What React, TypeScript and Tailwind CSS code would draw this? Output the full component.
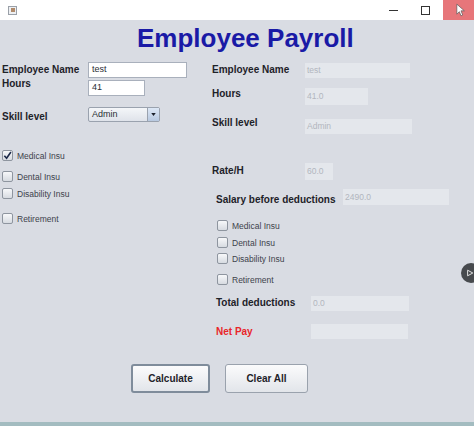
import type { ReactNode } from "react";

const font = { fontFamily: '"Liberation Sans", Arial, sans-serif' };

function Label({ children, className = "" }: { children: ReactNode; className?: string }) {
  return (
    <span className={`text-[10px] leading-[12px] font-bold text-[#1e2229] whitespace-nowrap ${className}`}>
      {children}
    </span>
  );
}

function Box({ checked = false }: { checked?: boolean }) {
  return (
    <span className="relative flex h-[11px] w-[11px] shrink-0 items-center justify-center rounded-[2px] border border-[#8e959f] bg-gradient-to-b from-[#f7f8fa] to-[#d7dbe1]">
      {checked && (
        <svg viewBox="0 0 10 10" className="h-[9px] w-[9px]">
          <path d="M1.5 5.2 L4 8 L8.8 1.2" fill="none" stroke="#1d2a4a" strokeWidth="1.8" />
        </svg>
      )}
    </span>
  );
}

function Check({ label, checked, className = "" }: { label: string; checked?: boolean; className?: string }) {
  return (
    <div className={`flex h-[13px] items-center gap-[4px] ${className}`}>
      <Box checked={checked} />
      <span className="text-[8.5px] leading-[10px] text-[#3d424b] whitespace-nowrap">{label}</span>
    </div>
  );
}

function Input({ value, className = "" }: { value: string; className?: string }) {
  return (
    <div className={`flex items-center border border-[#a9b0bc] bg-white pl-[3px] text-[9px] text-[#2a2e35] ${className}`}>
      {value}
    </div>
  );
}

function Output({ value, className = "" }: { value: string; className?: string }) {
  return (
    <div className={`flex items-center bg-[#e4e7ec] pl-[2px] text-[8.5px] text-[#b2b6be] ${className}`}>
      {value}
    </div>
  );
}

export default function App() {
  return (
    <div style={font} className="relative flex h-[426px] w-[474px] flex-col overflow-hidden bg-[#d9dce3]">
      {/* title bar */}
      <div className="flex h-[20px] shrink-0 items-center bg-white">
        <div className="ml-[8px] flex h-[9px] w-[9px] items-center justify-center border border-[#9aa0a8] bg-[#eef0f3]">
          <div className="h-[4px] w-[4px] bg-[#b08a6a]" />
        </div>
        <div className="ml-auto flex h-full items-center">
          <div className="mr-[23px] h-px w-[9px] bg-[#333]" />
          <div className="mr-[13px] h-[9px] w-[9px] border border-[#333]" />
          <div className="flex h-full w-[31px] items-center justify-center bg-[#e7767a]">
            <svg viewBox="0 0 12 16" className="ml-[4px] h-[14px] w-[10px]">
              <path d="M1 1 L1 13 L4 10 L6 15 L8 14 L6 9 L10 9 Z" fill="#fff" stroke="#555" strokeWidth="0.8" />
            </svg>
          </div>
        </div>
      </div>

      {/* heading */}
      <div className="mt-[3px] flex h-[30px] items-center pl-[137px]">
        <h1 className="text-[26px] leading-[30px] font-bold text-[#1a1aa6]">Employee Payroll</h1>
      </div>

      <div className="flex">
        {/* left column */}
        <div className="flex w-[212px] flex-col pl-[2px]">
          <div className="mt-[9px] flex h-[16px] items-start">
            <Label className="mt-[2px] w-[86px]">Employee Name</Label>
            <Input value="test" className="h-[16px] w-[99px]" />
          </div>
          <div className="mt-[2px] flex h-[16px] items-start">
            <Label className="-mt-[2px] w-[86px]">Hours</Label>
            <Input value="41" className="h-[16px] w-[57px]" />
          </div>
          <div className="mt-[11px] flex h-[16px] items-start">
            <Label className="mt-[4px] w-[86px]">Skill level</Label>
            <div className="flex h-[15px] w-[72px] items-center rounded-[2px] border border-[#9aa2ae] bg-gradient-to-b from-[#f4f6f9] to-[#dfe3ea]">
              <span className="flex-1 pl-[3px] text-[9px] text-[#2a2e35]">Admin</span>
              <div className="flex h-full w-[12px] items-center justify-center border-l border-[#9aa2ae] bg-gradient-to-b from-[#dde8f6] to-[#b7c8e0]">
                <svg viewBox="0 0 6 4" className="h-[3px] w-[5px]">
                  <path d="M0 0 H6 L3 4 Z" fill="#1a1f2a" />
                </svg>
              </div>
            </div>
          </div>
          <Check label="Medical Insu" checked className="mt-[26px]" />
          <Check label="Dental Insu" className="mt-[8px]" />
          <Check label="Disability Insu" className="mt-[4px]" />
          <Check label="Retirement" className="mt-[12px]" />
        </div>

        {/* right column */}
        <div className="flex flex-col">
          <div className="mt-[10px] flex h-[15px] items-start">
            <Label className="mt-[1px] w-[93px]">Employee Name</Label>
            <Output value="test" className="h-[15px] w-[105px]" />
          </div>
          <div className="mt-[10px] flex h-[17px] items-start">
            <Label className="w-[93px]">Hours</Label>
            <Output value="41.0" className="h-[17px] w-[63px]" />
          </div>
          <div className="mt-[14px] flex h-[15px] items-start">
            <Label className="-mt-[2px] w-[93px]">Skill level</Label>
            <Output value="Admin" className="h-[15px] w-[107px]" />
          </div>
          <div className="mt-[29px] flex h-[17px] items-start">
            <Label className="mt-[2px] w-[93px]">Rate/H</Label>
            <Output value="60.0" className="h-[17px] w-[28px]" />
          </div>
          <div className="mt-[9px] flex h-[17px] items-start pl-[4px]">
            <Label className="mt-[5px] w-[127px]">Salary before deductions</Label>
            <Output value="2490.0" className="h-[16px] w-[106px]" />
          </div>
          <div className="flex flex-col pl-[5px]">
            <Check label="Medical Insu" className="mt-[13px]" />
            <Check label="Dental Insu" className="mt-[4px]" />
            <Check label="Disability Insu" className="mt-[3px]" />
            <Check label="Retirement" className="mt-[8px]" />
          </div>
          <div className="mt-[10px] flex h-[15px] items-start pl-[4px]">
            <Label className="mt-[1px] w-[95px]">Total deductions</Label>
            <Output value="0.0" className="h-[15px] w-[98px]" />
          </div>
          <div className="mt-[13px] flex h-[15px] items-start pl-[4px]">
            <Label className="mt-[2px] w-[95px] text-[#e8262a]">Net Pay</Label>
            <Output value="" className="h-[15px] w-[97px]" />
          </div>
        </div>
      </div>

      {/* buttons */}
      <div className="mt-[25px] flex gap-[15px] pl-[131px]">
        <button
          type="button"
          className="flex h-[29px] w-[79px] items-center justify-center rounded-[3px] border-2 border-[#7f8c9b] bg-gradient-to-b from-[#fbfbfc] to-[#e2e5ea] text-[10px] font-bold text-[#1e2229]"
        >
          Calculate
        </button>
        <button
          type="button"
          className="flex h-[29px] w-[83px] items-center justify-center rounded-[3px] border border-[#9aa2ad] bg-gradient-to-b from-[#fbfbfc] to-[#e2e5ea] text-[10px] font-bold text-[#1e2229]"
        >
          Clear All
        </button>
      </div>

      <div className="mt-auto h-[4px] bg-[#a3bcc0]" />

      {/* video overlay play button */}
      <div className="absolute left-[461px] top-[263px] flex h-[20px] w-[20px] items-center justify-center rounded-full bg-[#474a4e]">
        <svg viewBox="0 0 10 10" className="ml-[-3px] h-[8px] w-[8px]">
          <path d="M2 1.5 L8.5 5 L2 8.5 Z" fill="none" stroke="#e6e6e6" strokeWidth="1.2" />
        </svg>
      </div>
    </div>
  );
}
